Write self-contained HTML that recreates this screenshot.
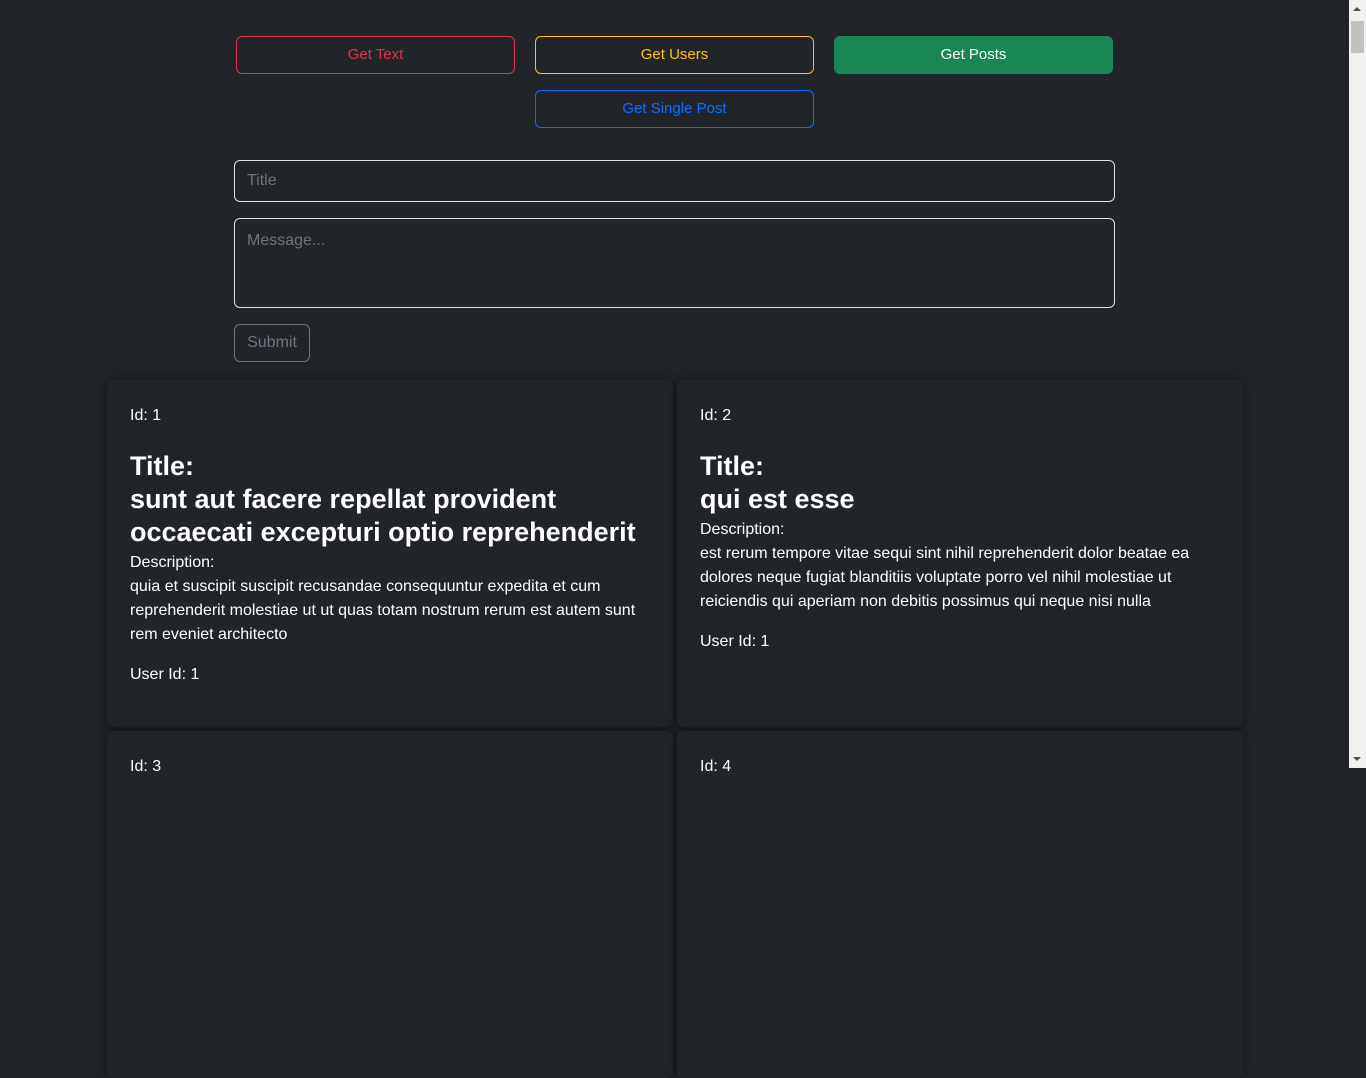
<!DOCTYPE html>
<html><head><meta charset="utf-8"><style>
html,body{margin:0;padding:0;}
body{width:1366px;height:768px;overflow:hidden;background:#212529;color:#fff;font-family:"Liberation Sans",sans-serif;font-size:16px;position:relative}
.btn{position:absolute;height:38px;width:279px;box-sizing:border-box;border:1px solid;border-radius:6px;text-align:center;line-height:36px;font-size:15px}
.in{position:absolute;left:234px;width:881px;box-sizing:border-box;border:1px solid #dee2e6;border-radius:6px;color:#6c757d;padding:0 12px;font-size:16px}
.card{position:absolute;width:566px;background:#212529;border-radius:6px;box-shadow:0 0 10px rgba(0,0,0,.45);box-sizing:border-box;padding:24px 23px;line-height:24px}
.card h2{font-size:27px;line-height:33px;margin:22px 0 2px;font-weight:bold}
.card p{margin:0}
.sb{position:absolute;right:0;top:0;width:17px;height:768px;background:#f1f1f1}
</style></head><body>
<div class="btn" style="left:236px;top:36px;border-color:#dc3545;color:#dc3545">Get Text</div>
<div class="btn" style="left:535px;top:36px;border-color:#ffc107;color:#ffc107">Get Users</div>
<div class="btn" style="left:834px;top:36px;border-color:#198754;background:#198754;color:#fff">Get Posts</div>
<div class="btn" style="left:535px;top:90px;border-color:#0d6efd;color:#0d6efd">Get Single Post</div>
<div class="in" style="top:160px;height:42px;line-height:40px">Title</div>
<div class="in" style="top:218px;height:90px;padding-top:10px;line-height:24px">Message...</div>
<div style="position:absolute;left:234px;top:324px;width:76px;height:38px;box-sizing:border-box;border:1px solid #6c757d;border-radius:6px;color:#6c757d;text-align:center;line-height:36px">Submit</div>
<div class="card" style="left:107px;top:380px;height:347px">
<p>Id: 1</p>
<h2>Title:<br>sunt aut facere repellat provident occaecati excepturi optio reprehenderit</h2>
<p>Description:</p>
<p>quia et suscipit suscipit recusandae consequuntur expedita et cum reprehenderit molestiae ut ut quas totam nostrum rerum est autem sunt rem eveniet architecto</p>
<p style="margin-top:16px">User Id: 1</p>
</div>
<div class="card" style="left:677px;top:380px;height:347px">
<p>Id: 2</p>
<h2>Title:<br>qui est esse</h2>
<p>Description:</p>
<p>est rerum tempore vitae sequi sint nihil reprehenderit dolor beatae ea dolores neque fugiat blanditiis voluptate porro vel nihil molestiae ut reiciendis qui aperiam non debitis possimus qui neque nisi nulla</p>
<p style="margin-top:16px">User Id: 1</p>
</div>
<div class="card" style="left:107px;top:731px;height:347px"><p>Id: 3</p></div>
<div class="card" style="left:677px;top:731px;height:347px"><p>Id: 4</p></div>
<div class="sb"><div style="position:absolute;left:2px;top:21px;width:13px;height:32px;background:#c1c1c1"></div>
<div style="position:absolute;left:4px;top:7px;width:0;height:0;border-left:4px solid transparent;border-right:4px solid transparent;border-bottom:4px solid #505050"></div>
<div style="position:absolute;left:4px;bottom:7px;width:0;height:0;border-left:4px solid transparent;border-right:4px solid transparent;border-top:4px solid #505050"></div></div>
</body></html>
